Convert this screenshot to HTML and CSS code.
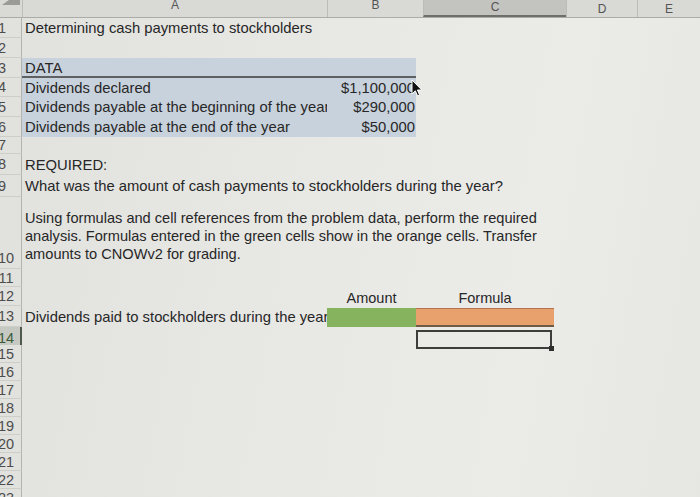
FILE: index.html
```html
<!DOCTYPE html>
<html>
<head>
<meta charset="utf-8">
<link rel="stylesheet" href="styles.css">
</head>
<body>
<div class="sheet">
  <div class="hdr">
    <div class="corner"><span class="tri"></span></div>
    <div class="ch ca">A</div>
    <div class="ch cb">B</div>
    <div class="ch cc sel">C</div>
    <div class="ch cd">D</div>
    <div class="ch ce">E</div>
  </div>

  <div class="row r1"><div class="rh one"><span>1</span></div><div class="cell">Determining cash payments to stockholders</div></div>
  <div class="row r2"><div class="rh one"><span>2</span></div></div>
  <div class="row r3"><div class="rh one"><span>3</span></div><div class="cell blue head">DATA</div><div class="cell blue head"></div></div>
  <div class="row r4"><div class="rh one"><span>4</span></div><div class="cell blue">Dividends declared</div><div class="cell blue num">$1,100,000</div></div>
  <div class="row r5"><div class="rh one"><span>5</span></div><div class="cell blue">Dividends payable at the beginning of the year</div><div class="cell blue num">$290,000</div></div>
  <div class="row r6"><div class="rh one"><span>6</span></div><div class="cell blue">Dividends payable at the end of the year</div><div class="cell blue num">$50,000</div></div>
  <div class="row r7"><div class="rh one"><span>7</span></div></div>
  <div class="row r8"><div class="rh one"><span>8</span></div><div class="cell">REQUIRED:</div></div>
  <div class="row r9"><div class="rh one"><span>9</span></div><div class="cell">What was the amount of cash payments to stockholders during the year?</div></div>
  <div class="row r10"><div class="rh bottom"><span>10</span></div><div class="para">Using formulas and cell references from the problem data, perform the required<br>analysis. Formulas entered in the green cells show in the orange cells. Transfer<br>amounts to CNOWv2 for grading.</div></div>
  <div class="row r11"><div class="rh"><span>11</span></div></div>
  <div class="row r12"><div class="rh"><span>12</span></div><div class="cell"></div><div class="cell label">Amount</div><div class="cell label">Formula</div></div>
  <div class="row r13"><div class="rh"><span>13</span></div><div class="cell clip">Dividends paid to stockholders during the year</div><div class="cell green"></div><div class="cell orange"></div></div>
  <div class="row r14"><div class="rh cur"><span>14</span></div><div class="cell"></div><div class="cell"></div><div class="cell"><div class="selbox"><span class="handle"></span></div></div></div>
  <div class="row rs"><div class="rh"><span>15</span></div></div>
  <div class="row rs"><div class="rh"><span>16</span></div></div>
  <div class="row rs"><div class="rh"><span>17</span></div></div>
  <div class="row rs"><div class="rh"><span>18</span></div></div>
  <div class="row rs"><div class="rh"><span>19</span></div></div>
  <div class="row rs"><div class="rh"><span>20</span></div></div>
  <div class="row rs"><div class="rh"><span>21</span></div></div>
  <div class="row rs"><div class="rh"><span>22</span></div></div>
  <div class="row rs"><div class="rh"><span>23</span></div></div>

  <svg class="pointer" width="12" height="18" viewBox="0 0 12 18"><path d="M1 1 L1 15 L4.3 11.8 L6.6 16.8 L8.6 15.9 L6.4 11 L10.8 11 Z" fill="#111" stroke="#fff" stroke-width="1"/></svg>
</div>
</body>
</html>
```

FILE: styles.css
```css
body {
  margin: 0;
  width: 700px;
  height: 497px;
  overflow: hidden;
  background: linear-gradient(100deg, #e1e1de 0%, #e8e8e5 45%, #ebebe8 75%, #e6e6e3 100%);
  font-family: "Liberation Sans", Arial, sans-serif;
  color: #272727;
}

.sheet {
  position: relative;
  width: 700px;
  height: 497px;
}

.hdr {
  display: grid;
  grid-template-columns: 22px 305px 96px 143px 71px 1fr;
  height: 17px;
  background: #d9d9d6;
  border-bottom: 1px solid #ababa8;
}

.corner {
  position: relative;
  overflow: hidden;
}

.tri {
  position: absolute;
  right: 2px;
  top: -8px;
  width: 0;
  height: 0;
  border-left: 18px solid transparent;
  border-bottom: 13px solid #9a9a97;
}

.ch {
  border-left: 1px solid #bcbcb9;
  text-align: center;
  font-size: 12px;
  line-height: 13px;
  color: #555;
  overflow: hidden;
}

.ca, .cb { line-height: 11px; }
.cc { line-height: 15px; }
.cd, .ce { line-height: 19px; }

.ch.sel {
  background: #c3c3bf;
  border-bottom: 2px solid #6e6e6a;
}

.row {
  display: grid;
  grid-template-columns: 22px 305px 89px 138px 1fr;
}

.r1 { height: 20px; }
.r2 { height: 20px; }
.r3 { height: 20px; }
.r4 { height: 19px; }
.r5 { height: 20px; }
.r6 { height: 20px; }
.r7 { height: 17px; }
.r8 { height: 21px; }
.r9 { height: 22px; }
.r10 { height: 72px; }
.r11 { height: 18px; }
.r12 { height: 19px; }
.r13 { height: 21px; }
.r14 { height: 18px; }
.rs { height: 18px; }

.rh {
  position: relative;
  overflow: hidden;
  display: flex;
  align-items: center;
  background: #e1e1de;
  border-right: 1px solid #b3b3b0;
  border-bottom: 1px solid #cdcdc9;
  box-sizing: border-box;
}

.rh span {
  flex: none;
  margin-left: -11px;
  width: 34px;
  text-align: center;
  font-size: 14.5px;
  color: #4d4d4d;
}

.rh.one span {
  margin-left: -15px;
}

.rh.bottom {
  align-items: flex-end;
  padding-bottom: 2px;
}

.rh.cur {
  background: #c6c9c2;
  border-right: 2px solid #4f5a4c;
}

.rh.cur span {
  color: #3d5a3a;
}

.cell {
  display: flex;
  align-items: center;
  white-space: nowrap;
  font-size: 14.8px;
  padding-left: 3px;
  min-width: 0;
}

.clip {
  overflow: hidden;
}

.blue {
  background: #c8d2dc;
}

.head {
  border-bottom: 2px solid #5e6062;
  box-sizing: border-box;
  padding-top: 2px;
}

.num {
  justify-content: flex-end;
  padding-left: 0;
  padding-right: 1px;
}

.para {
  grid-column: 2 / 5;
  padding-top: 12px;
  padding-left: 3px;
  font-size: 14.6px;
  line-height: 18px;
  white-space: nowrap;
}

.label {
  justify-content: center;
  align-items: flex-end;
  font-size: 14.5px;
  padding-left: 0;
}

.green {
  background: #86b35d;
  margin-top: 2px;
}

.orange {
  background: #e8a06d;
  margin-top: 2px;
  border-top: 1px solid #b37550;
  border-bottom: 2px solid #6f5a48;
}

.selbox {
  position: relative;
  width: 136px;
  height: 19px;
  margin-top: 3px;
  margin-left: -3px;
  border: 2px solid #3d3d3b;
  box-sizing: border-box;
  align-self: flex-start;
}

.handle {
  position: absolute;
  right: -4px;
  bottom: -4px;
  width: 5px;
  height: 5px;
  background: #2f2f2d;
}

.pointer {
  position: absolute;
  left: 411px;
  top: 79px;
}
```
